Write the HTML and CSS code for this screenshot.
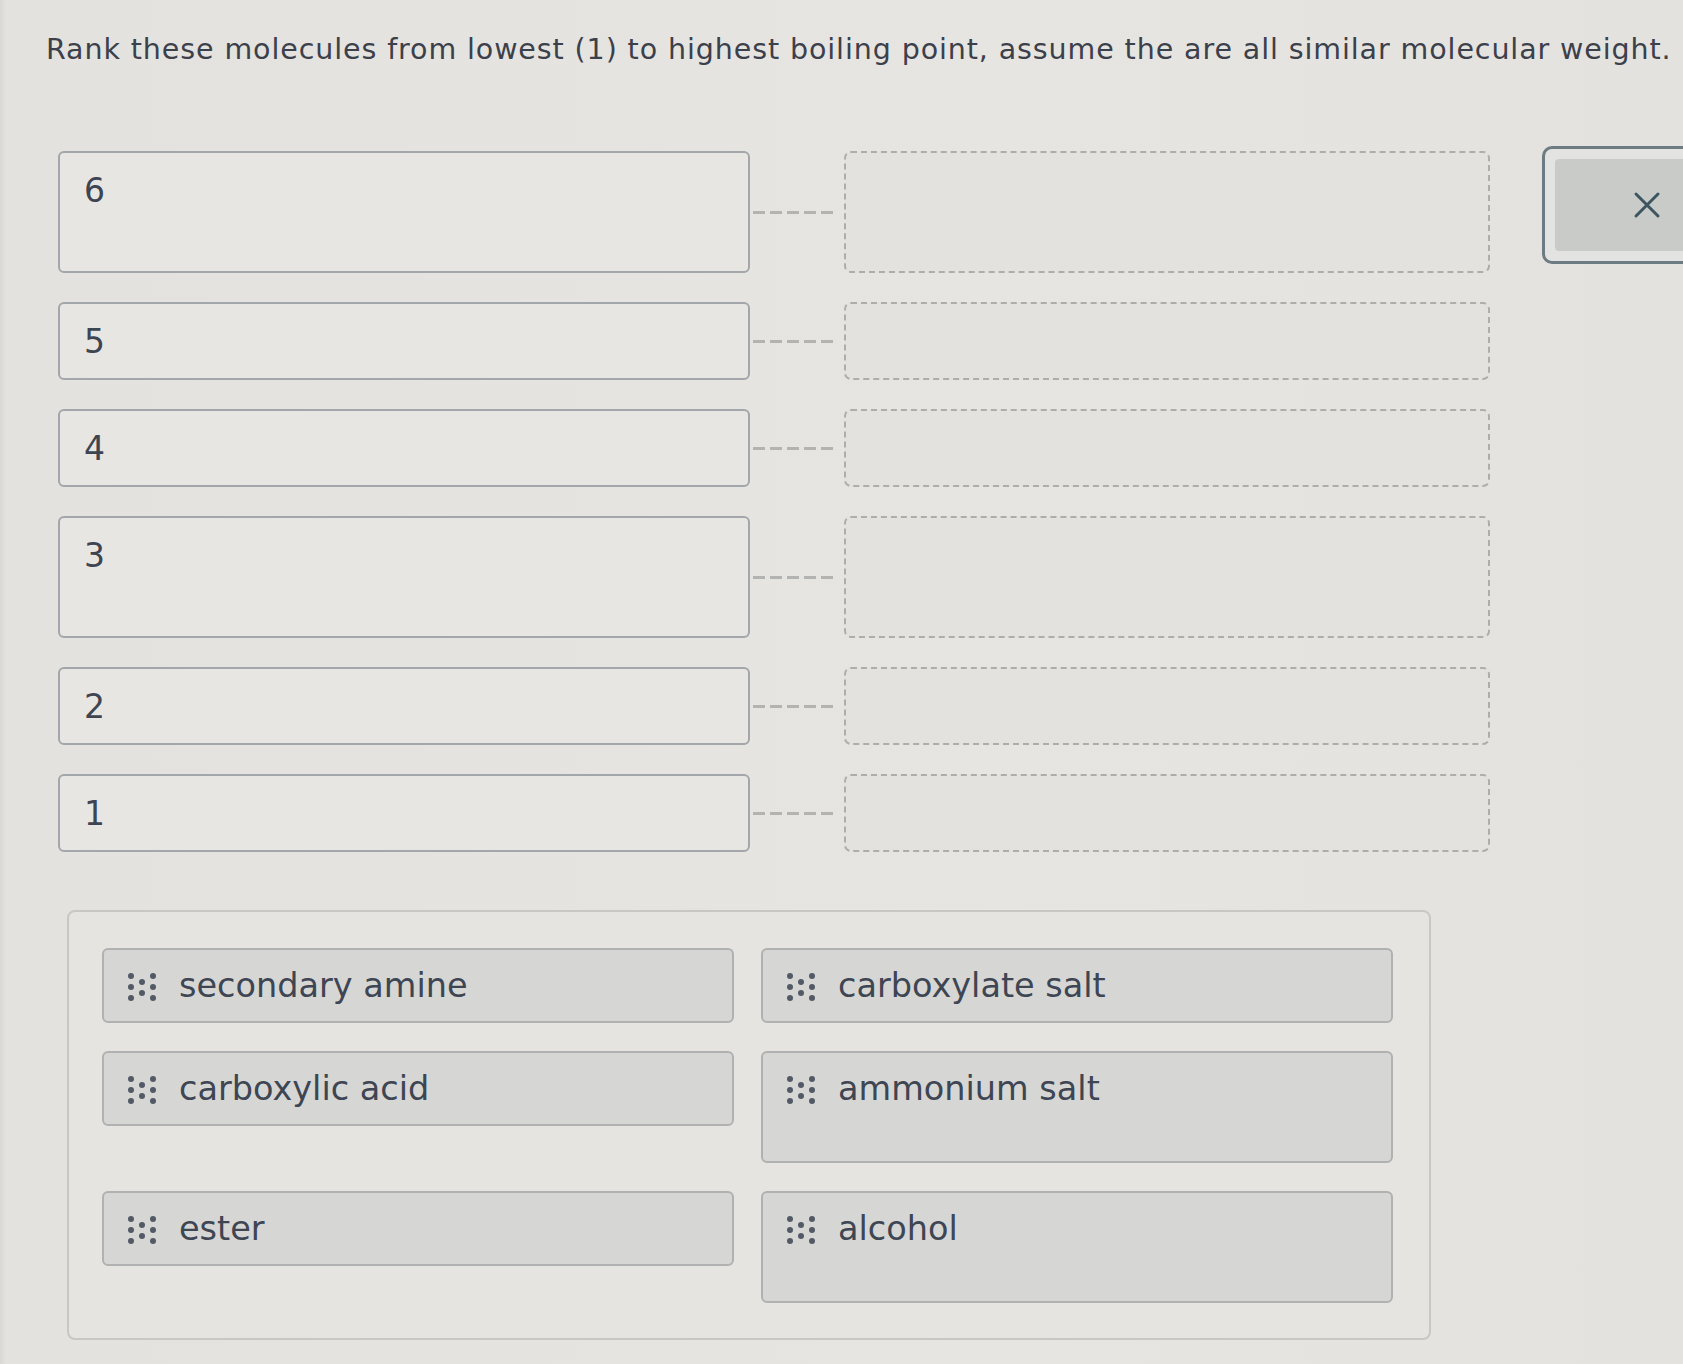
FILE: index.html
```html
<!DOCTYPE html>
<html>
<head>
<meta charset="utf-8">
<link rel="stylesheet" href="styles.css">
</head>
<body>
<div class="page">
  <h1 class="title">Rank these molecules from lowest (1) to highest boiling point, assume the are all similar molecular weight.</h1>
  <div class="ranking">
    <div class="rows">
      <div class="row tall"><div class="slot"><span class="num">6</span></div><div class="link"></div><div class="drop"></div></div>
      <div class="row"><div class="slot"><span class="num">5</span></div><div class="link"></div><div class="drop"></div></div>
      <div class="row"><div class="slot"><span class="num">4</span></div><div class="link"></div><div class="drop"></div></div>
      <div class="row tall"><div class="slot"><span class="num">3</span></div><div class="link"></div><div class="drop"></div></div>
      <div class="row"><div class="slot"><span class="num">2</span></div><div class="link"></div><div class="drop"></div></div>
      <div class="row"><div class="slot"><span class="num">1</span></div><div class="link"></div><div class="drop"></div></div>
    </div>
    <div class="close">
      <div class="close-inner">
        <svg width="30" height="30" viewBox="0 0 30 30"><path d="M4 4 L26 26 M26 4 L4 26" stroke="#3d5561" stroke-width="3" fill="none" stroke-linecap="round"/></svg>
      </div>
    </div>
  </div>
  <div class="bank">
    <div class="item"><span class="grip"><i></i><i></i><i></i><i></i><i></i><i></i><i></i><i></i></span>secondary amine</div>
    <div class="item"><span class="grip"><i></i><i></i><i></i><i></i><i></i><i></i><i></i><i></i></span>carboxylate salt</div>
    <div class="item"><span class="grip"><i></i><i></i><i></i><i></i><i></i><i></i><i></i><i></i></span>carboxylic acid</div>
    <div class="item big"><span class="grip"><i></i><i></i><i></i><i></i><i></i><i></i><i></i><i></i></span>ammonium salt</div>
    <div class="item"><span class="grip"><i></i><i></i><i></i><i></i><i></i><i></i><i></i><i></i></span>ester</div>
    <div class="item big"><span class="grip"><i></i><i></i><i></i><i></i><i></i><i></i><i></i><i></i></span>alcohol</div>
  </div>
</div>
</body>
</html>
```
FILE: styles.css
```css
html, body {
  margin: 0;
  padding: 0;
  background: #e5e3df;
  overflow: hidden;
}
.page {
  width: 1683px;
  height: 1364px;
  font-family: "DejaVu Sans", Verdana, sans-serif;
  color: #3b404b;
  background: linear-gradient(90deg, #d9d8d5 0px, #e4e2de 6px, #e7e5e1 60%, #e4e2de 100%);
}
.title {
  margin: 0;
  padding: 31px 0 0 46px;
  font-size: 28.5px;
  font-weight: normal;
  line-height: 38px;
  white-space: nowrap;
  letter-spacing: 0.9px;
}
.ranking {
  display: flex;
  align-items: flex-start;
  margin-top: 82px;
}
.rows {
  display: flex;
  flex-direction: column;
  gap: 29px;
  padding-left: 58px;
}
.row {
  display: flex;
  align-items: stretch;
  height: 78px;
}
.row.tall {
  height: 122px;
}
.slot {
  width: 692px;
  box-sizing: border-box;
  border: 2px solid #a3a6aa;
  border-radius: 6px;
  background: #e8e6e2;
  padding: 18px 0 0 24px;
}
.num {
  font-size: 33px;
  line-height: 40px;
  color: #3d4452;
}
.link {
  width: 94px;
  display: flex;
  align-items: center;
  padding: 0 8px 0 3px;
  box-sizing: border-box;
}
.link::before {
  content: "";
  display: block;
  width: 80px;
  height: 3px;
  background: repeating-linear-gradient(90deg, #b3b3b2 0 12px, transparent 12px 17px);
}
.drop {
  width: 646px;
  box-sizing: border-box;
  border: 2px dashed #adadab;
  border-radius: 7px;
  background: #e4e2de;
}
.close {
  margin-left: 52px;
  margin-top: -5px;
  width: 170px;
  height: 118px;
  box-sizing: border-box;
  border: 3px solid #6d7b83;
  border-radius: 10px;
  padding: 10px;
  background: #e3e4e1;
  flex-shrink: 0;
}
.close-inner {
  height: 100%;
  background: #c9cbc8;
  border-radius: 4px;
  display: flex;
  align-items: center;
  padding-left: 77px;
}
.close-inner svg {
  display: block;
}
.bank {
  margin: 58px 0 0 67px;
  width: 1364px;
  height: 430px;
  box-sizing: border-box;
  border: 2px solid #c9c7c3;
  border-radius: 8px;
  background: #e6e4e0;
  padding: 36px 36px 0 33px;
  display: grid;
  grid-template-columns: 632px 632px;
  column-gap: 27px;
  row-gap: 28px;
  align-items: start;
  align-content: start;
}
.item {
  height: 75px;
  box-sizing: border-box;
  border: 2px solid #b0b1b0;
  border-radius: 6px;
  background: #d6d7d4;
  display: flex;
  align-items: flex-start;
  padding: 16px 0 0 22px;
  font-size: 33.5px;
  line-height: 40px;
  color: #3e4553;
}
.item.big {
  height: 112px;
}
.grip {
  position: relative;
  width: 30px;
  height: 30px;
  margin: 5px 23px 0 0;
  flex-shrink: 0;
}
.grip i {
  position: absolute;
  width: 6px;
  height: 6px;
  border-radius: 50%;
  background: #525a66;
}
.grip i:nth-child(1) { left: 2px; top: 2px; }
.grip i:nth-child(2) { left: 2px; top: 13px; }
.grip i:nth-child(3) { left: 2px; top: 24px; }
.grip i:nth-child(4) { left: 13px; top: 8px; }
.grip i:nth-child(5) { left: 13px; top: 19px; }
.grip i:nth-child(6) { left: 24px; top: 2px; }
.grip i:nth-child(7) { left: 24px; top: 13px; }
.grip i:nth-child(8) { left: 24px; top: 24px; }
```
